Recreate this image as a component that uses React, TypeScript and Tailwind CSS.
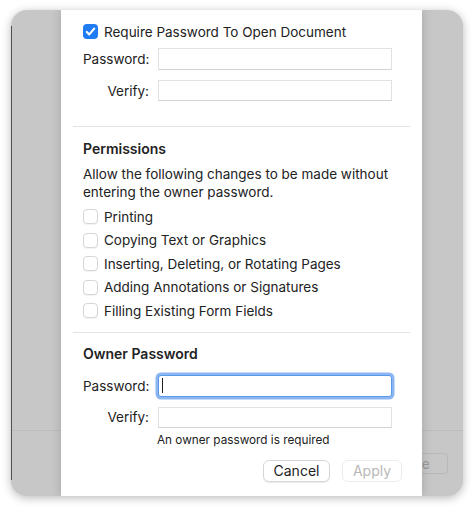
import React from "react";

function Check({ checked, label }: { checked?: boolean; label: string }) {
  return (
    <div className="flex items-center h-[23.5px]">
      {checked ? (
        <div className="w-[15px] h-[15px] rounded-[4px] bg-[#1f7cf3] flex items-center justify-center shrink-0">
          <svg width="15" height="15" viewBox="0 0 15 15">
            <path d="M3.8 7.9 L6.3 10.4 L11.2 4.6" fill="none" stroke="white" strokeWidth="2.1" strokeLinecap="round" strokeLinejoin="round" />
          </svg>
        </div>
      ) : (
        <div className="w-[15px] h-[15px] rounded-[4px] bg-white border border-[#d6d6d6] shadow-[0_1px_1px_rgba(0,0,0,0.05)] shrink-0" />
      )}
      <span className="ml-[6px]">{label}</span>
    </div>
  );
}

function Field({ label, focused, h = "h-[22px]", cls = "" }: { label: string; focused?: boolean; h?: string; cls?: string }) {
  return (
    <div className={`flex items-center ${cls}`}>
      <div className="w-[66px] text-right">{label}</div>
      <div className="ml-[9px] w-[234px]">
        {focused ? (
          <div className={`${h} rounded-[3px] border border-[#5c98ea] ring-[2.5px] ring-[#8bb6f1] bg-white flex items-center pl-[3px]`}>
            <div className="w-px h-[15px] bg-[#1f1f1f]" />
          </div>
        ) : (
          <div className={`${h} border border-[#e2e2e2] border-b-[#d2d2d2] bg-white`} />
        )}
      </div>
    </div>
  );
}

export default function App() {
  return (
    <div className="w-[474px] h-[507px] bg-white pl-[11px] pt-[10px] font-['Inter','Liberation_Sans',sans-serif] text-[13.5px] text-[#222222] leading-[20px]">
      <div className="relative w-[452px] h-[486px] rounded-[16px] bg-[#c7c7c7] shadow-[0_2px_10px_rgba(0,0,0,0.28)] overflow-hidden">
        {/* left dark window edge */}
        <div className="absolute left-0 top-[16px] bottom-[16px] w-px bg-[#505050]" />
        {/* faint horizontal line behind */}
        <div className="absolute left-[1px] right-0 top-[420px] h-px bg-[#bcbcbc]" />
        {/* ghost button behind the sheet */}
        <div className="absolute left-[370px] top-[443px] w-[67px] h-[21px] border border-[#b9b9b9] rounded-[4px] flex items-center justify-center text-[#9a9a9a] text-[13px]">
          Save
        </div>
        {/* the sheet */}
        <div className="absolute left-[50px] top-0 w-[361px] h-[486px] bg-white shadow-[0_0_10px_rgba(0,0,0,0.18)] px-[22px] pt-[10px]">
          <Check checked label="Require Password To Open Document" />
          <Field label="Password:" cls="mt-[4.5px]" />
          <Field label="Verify:" cls="mt-[10px]" h="h-[21px]" />
          <div className="-mx-[10px] mt-[25px] h-px bg-[#e3e3e3]" />
          <div className="mt-[12px] text-[14px] font-semibold">Permissions</div>
          <div className="mt-[6px] leading-[18px]">
            Allow the following changes to be made without
            <br />
            entering the owner password.
          </div>
          <div className="mt-[4px]">
            <Check label="Printing" />
            <Check label="Copying Text or Graphics" />
            <Check label="Inserting, Deleting, or Rotating Pages" />
            <Check label="Adding Annotations or Signatures" />
            <Check label="Filling Existing Form Fields" />
          </div>
          <div className="-mx-[10px] mt-[9px] h-px bg-[#e3e3e3]" />
          <div className="mt-[11px] text-[14px] font-semibold">Owner Password</div>
          <Field label="Password:" focused cls="mt-[11px]" />
          <Field label="Verify:" cls="mt-[10px]" h="h-[21px]" />
          <div className="mt-[4px] pl-[74px] text-[11.75px] leading-[16px]">An owner password is required</div>
          <div className="mt-[12px] -mr-[2px] flex justify-end gap-[12px]">
            <button className="w-[67px] h-[22px] rounded-[6px] bg-white border border-[#d6d6d6] shadow-[0_1px_1px_rgba(0,0,0,0.08)] text-[#222222] text-[14px] leading-[20px]">
              Cancel
            </button>
            <button className="w-[60px] h-[22px] rounded-[6px] bg-white border border-[#ebebeb] text-[#b8b8b8] text-[14px] leading-[20px]">
              Apply
            </button>
          </div>
        </div>
      </div>
    </div>
  );
}
